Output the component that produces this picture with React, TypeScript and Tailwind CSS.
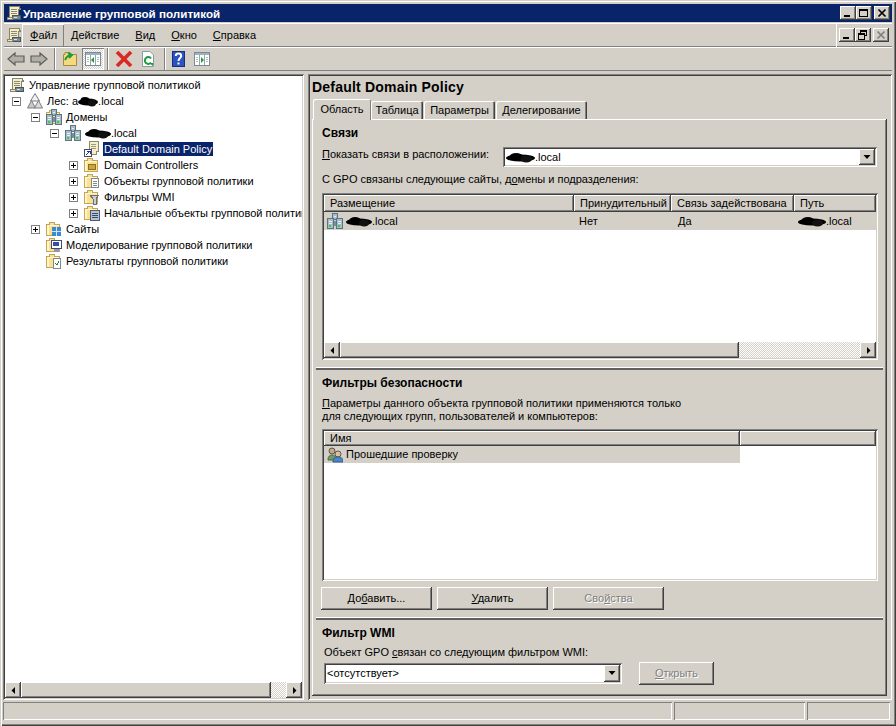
import React from "react";

const raised = "shadow-[inset_-1px_-1px_0_#404040,inset_1px_1px_0_#ffffff,inset_-2px_-2px_0_#808080]";
const sunken = "shadow-[inset_1px_1px_0_#808080,inset_-1px_-1px_0_#ffffff,inset_2px_2px_0_#404040,inset_-2px_-2px_0_#d4d0c8]";
const dither = "bg-[repeating-conic-gradient(#ffffff_0_25%,#d4d0c8_0_50%)] bg-[length:2px_2px]";
const tab = "flex h-[18px] items-center justify-center rounded-t-[2px] pt-[1px] shadow-[inset_1px_1px_0_#ffffff,inset_-1px_0_0_#404040,inset_-2px_0_0_#808080]";

function Blob({ w }: { w: number }) {
  return (
    <svg width={w} height={11} viewBox={`0 0 ${w} 11`} className="shrink-0">
      <ellipse cx={w / 2} cy={6} rx={w / 2} ry={3.6} fill="#000" />
      <ellipse cx={w * 0.35} cy={4} rx={w * 0.22} ry={3} fill="#000" />
      <ellipse cx={w * 0.7} cy={7} rx={w * 0.2} ry={3.5} fill="#111" />
    </svg>
  );
}

function Redacted({ prefix, w }: { prefix?: string; w: number }) {
  return (
    <span className="flex items-center">
      {prefix ? <span>{prefix}</span> : null}
      <Blob w={w} />
      <span>.local</span>
    </span>
  );
}

function Scroll() {
  return (
    <svg width="16" height="16" viewBox="0 0 16 16" shapeRendering="crispEdges" className="shrink-0">
      <path d="M3.5 1.5h10v2h1v1h-2v8h-9z" fill="#f6eec4" stroke="#85856f" strokeWidth="1" />
      <path d="M5 4h6M5 6h6M5 8h6" stroke="#8a8a78" />
      <rect x="6.5" y="10.5" width="8" height="4" fill="#7c8a96" stroke="#4a545c" />
      <rect x="8" y="12" width="3" height="1" fill="#dce4ea" />
      <rect x="1.5" y="12.5" width="5" height="2" fill="#efe8c0" stroke="#85856f" />
    </svg>
  );
}

function Forest() {
  return (
    <svg width="16" height="16" viewBox="0 0 16 16" className="shrink-0">
      <path d="M8 0.5L12.5 8H3.5z" fill="#f0f0f0" stroke="#7c7c7c" />
      <path d="M4.5 7.5L8.5 15H0.5z" fill="#c8c8c8" stroke="#7c7c7c" />
      <path d="M11.5 7.5L15.5 15H7.5z" fill="#dadada" stroke="#7c7c7c" />
    </svg>
  );
}

function Servers() {
  return (
    <svg width="16" height="16" viewBox="0 0 16 16" shapeRendering="crispEdges" className="shrink-0">
      <rect x="5.5" y="0.5" width="5" height="6" fill="#a8bcc8" stroke="#5c7484" />
      <rect x="0.5" y="5.5" width="6" height="10" fill="#a8bcc8" stroke="#5c7484" />
      <rect x="9.5" y="5.5" width="6" height="10" fill="#a8bcc8" stroke="#5c7484" />
      <path d="M2 8h3M2 10h3M11 8h3M11 10h3M7 3h2" stroke="#e8f0f4" />
      <rect x="2" y="12" width="2" height="2" fill="#35d035" />
      <rect x="11" y="12" width="2" height="2" fill="#35d035" />
      <path d="M7 8h2v5H7z" fill="#7a8f9c" />
    </svg>
  );
}

function Folder({ children }: { children?: React.ReactNode }) {
  return (
    <svg width="16" height="16" viewBox="0 0 16 16" shapeRendering="crispEdges" className="shrink-0">
      <path d="M0.5 3.5V14.5H13.5V3.5H8.5V1.5H3.5V3.5z" fill="#fbe08f" stroke="#c4a458" />
      <path d="M1 4h12" stroke="#fff6d0" />
      <rect x="1" y="5" width="2" height="9" fill="#fff6d0" />
      {children}
    </svg>
  );
}

function GpoLink() {
  return (
    <svg width="16" height="16" viewBox="0 0 16 16" shapeRendering="crispEdges" className="shrink-0">
      <path d="M5.5 0.5H14.5V10.5H12.5V13.5H5.5z" fill="#f6eec4" stroke="#8a8a70" />
      <path d="M7 3h5M7 5h5M7 7h5" stroke="#9a9a88" />
      <rect x="0.5" y="8.5" width="7" height="7" fill="#fff" stroke="#4a4a60" />
      <path d="M2 14L6 10M3 10h3v3" stroke="#1830a0" fill="none" />
    </svg>
  );
}

function Users() {
  return (
    <svg width="16" height="16" viewBox="0 0 16 16" className="shrink-0">
      <circle cx="5" cy="4" r="3" fill="#c9a688" stroke="#5a5a50" />
      <path d="M1 13c0-4 2-5 4-5s4 1 4 5z" fill="#6f9a62" stroke="#4a6a45" />
      <circle cx="11" cy="7" r="3" fill="#e0bd9c" stroke="#5a5a50" />
      <path d="M6 15c0-4 2-5 5-5s5 1 5 5z" fill="#4a86c8" stroke="#2f5a90" />
    </svg>
  );
}

function Arrow({ dir }: { dir: "l" | "r" }) {
  return (
    <svg width="18" height="14" viewBox="0 0 18 14" className="shrink-0">
      <path
        d={dir === "l" ? "M1 7L8 1V4H17V10H8V13z" : "M17 7L10 1V4H1V10H10V13z"}
        fill="#b0b0a8"
        stroke="#5e5e58"
        strokeWidth="1.2"
      />
    </svg>
  );
}

function PaneIcon({ left }: { left: boolean }) {
  return (
    <svg width="16" height="14" viewBox="0 0 16 14" shapeRendering="crispEdges" className="shrink-0">
      <rect x="0.5" y="0.5" width="15" height="13" fill="#fff" stroke="#7a8a96" />
      <rect x="1" y="1" width="14" height="2" fill="#9cb0be" />
      <path d="M5.5 3V13M10.5 3V13" stroke="#9aa6ae" />
      <path d="M2 5h2M2 7h2M2 9h2M12 5h2M12 7h2M12 9h2" stroke="#b0bac2" />
      <path d={left ? "M9 5V11L6 8z" : "M7 5V11L10 8z"} fill="#1c9c3c" shapeRendering="auto" />
    </svg>
  );
}

function Tri({ dir }: { dir: "l" | "r" | "d" }) {
  const d = dir === "l" ? "M5 1V8L1.5 4.5z" : dir === "r" ? "M2 1V8L5.5 4.5z" : "M0.5 2H7.5L4 6z";
  const w = dir === "d" ? 8 : 7;
  return (
    <svg width={w} height="9" viewBox={`0 0 ${w} 9`}>
      <path d={d} fill="#000" />
    </svg>
  );
}

function SmallBtn({ dir, w = 16, h = 16 }: { dir: "l" | "r" | "d"; w?: number; h?: number }) {
  return (
    <div style={{ width: w, height: h }} className={`flex shrink-0 items-center justify-center bg-[#d4d0c8] ${raised}`}>
      <Tri dir={dir} />
    </div>
  );
}

function Exp({ open }: { open: boolean }) {
  return (
    <svg width="9" height="9" viewBox="0 0 9 9" shapeRendering="crispEdges" className="shrink-0">
      <rect x="0.5" y="0.5" width="8" height="8" fill="#fff" stroke="#808080" />
      <path d="M2 4.5H7" stroke="#000" />
      {open ? null : <path d="M4.5 2V7" stroke="#000" />}
    </svg>
  );
}

function Row({ pad, exp, icon, children, sel }: { pad: number; exp?: "o" | "c"; icon: React.ReactNode; children: React.ReactNode; sel?: boolean }) {
  return (
    <div style={{ paddingLeft: pad }} className="flex h-4 items-center whitespace-nowrap">
      <div className="flex w-[15px] shrink-0 items-center">{exp ? <Exp open={exp === "o"} /> : null}</div>
      {icon}
      <div className={`ml-[3px] flex h-[14px] items-center px-[1px] ${sel ? "bg-[#0a246a] text-white" : ""}`}>{children}</div>
    </div>
  );
}

function WinBtn({ children, w = 16 }: { children: React.ReactNode; w?: number }) {
  return (
    <div style={{ width: w }} className={`flex h-[14px] shrink-0 items-center justify-center bg-[#d4d0c8] ${raised}`}>
      {children}
    </div>
  );
}

const MinG = () => (
  <svg width="10" height="10" viewBox="0 0 10 10" shapeRendering="crispEdges"><rect x="1" y="7" width="6" height="2" fill="#000" /></svg>
);
const MaxG = () => (
  <svg width="10" height="10" viewBox="0 0 10 10" shapeRendering="crispEdges"><path d="M0.5 1.5H8.5V8.5H0.5z" fill="none" stroke="#000" /><rect x="0" y="1" width="9" height="2" fill="#000" /></svg>
);
const CloseG = ({ color = "#000" }: { color?: string }) => (
  <svg width="10" height="10" viewBox="0 0 10 10"><path d="M1.5 1.5L8.5 8.5M8.5 1.5L1.5 8.5" stroke={color} strokeWidth="1.7" /></svg>
);
const RestoreG = () => (
  <svg width="10" height="10" viewBox="0 0 10 10" shapeRendering="crispEdges">
    <path d="M2.5 2.5V0.5H8.5V5.5H6.5" fill="none" stroke="#000" />
    <rect x="2" y="0" width="7" height="2" fill="#000" />
    <path d="M0.5 3.5H6.5V9.5H0.5z" fill="#d4d0c8" stroke="#000" />
    <rect x="0" y="3" width="7" height="2" fill="#000" />
  </svg>
);

function Btn({ w, h = 23, disabled, children }: { w: number; h?: number; disabled?: boolean; children: React.ReactNode }) {
  return (
    <div style={{ width: w, height: h }} className={`flex shrink-0 items-center justify-center bg-[#d4d0c8] ${raised} ${disabled ? "text-[#808080] [text-shadow:1px_1px_0_#ffffff]" : ""}`}>
      {children}
    </div>
  );
}

function Head({ w, h = 17, children, grow }: { w?: number; h?: number; children?: React.ReactNode; grow?: boolean }) {
  return (
    <div style={w ? { width: w, height: h } : { height: h }} className={`flex shrink-0 items-center overflow-hidden whitespace-nowrap bg-[#d4d0c8] pl-[6px] shadow-[inset_-1px_-1px_0_#404040,inset_1px_1px_0_#ffffff,inset_-2px_-2px_0_#808080] ${grow ? "flex-1" : ""}`}>
      {children}
    </div>
  );
}

function Sep() {
  return <div className="-ml-[6px] mr-[-5px] h-[3px] border-t border-t-white border-b-2 border-b-[#606060] bg-[#d4d0c8]" />;
}

function VSep() {
  return <div className="mx-[3px] h-[22px] w-[2px] border-l border-l-[#808080] border-r border-r-white" />;
}

export default function App() {
  return (
    <div className="flex h-[726px] w-[896px] flex-col overflow-hidden bg-[#d4d0c8] px-[3px] pt-[2px] font-['Liberation_Sans',sans-serif] text-[11px] leading-[13px] text-black shadow-[inset_1px_1px_0_#d4d0c8,inset_2px_2px_0_#ffffff,inset_-1px_-1px_0_#404040,inset_-2px_-2px_0_#808080]">
      {/* title bar */}
      <div className="mx-[1px] mt-[2px] flex h-[18px] shrink-0 items-center bg-[#0a246a] pl-[2px] pr-[2px] text-white">
        <Scroll />
        <span className="ml-[1px] text-[11.65px] font-bold">Управление групповой политикой</span>
        <div className="ml-auto flex">
          <WinBtn><MinG /></WinBtn>
          <WinBtn><MaxG /></WinBtn>
          <div className="ml-[2px]"><WinBtn><CloseG /></WinBtn></div>
        </div>
      </div>

      {/* menu */}
      <div className="mx-[1px] mt-[1px] flex h-[24px] shrink-0 items-center border-t border-t-white border-b border-b-[#808080] pl-[2px]">
        <Scroll />
        <div className="flex h-[23px] w-[42px] items-center pl-[8px] shadow-[inset_1px_1px_0_#ffffff,inset_-1px_-1px_0_#808080]">
          <span><u>Ф</u>айл</span>
        </div>
        <span className="ml-[7px]"><u>Д</u>ействие</span>
        <span className="ml-[16px]"><u>В</u>ид</span>
        <span className="ml-[16px]"><u>О</u>кно</span>
        <span className="ml-[16px]"><u>С</u>правка</span>
        <div className="ml-auto flex h-[23px] items-center border-l border-l-white pl-[2px] pr-[3px]">
          <WinBtn><MinG /></WinBtn>
          <WinBtn><RestoreG /></WinBtn>
          <div className="ml-[2px]"><WinBtn><CloseG color="#808080" /></WinBtn></div>
        </div>
      </div>

      {/* toolbar */}
      <div className="mx-[1px] flex h-[24px] shrink-0 items-center border-t border-t-white border-b border-b-[#808080] pl-[3px]">
        <Arrow dir="l" />
        <div className="ml-[5px]"><Arrow dir="r" /></div>
        <div className="ml-[3px]"><VSep /></div>
        <div className="ml-[3px]">
          <svg width="16" height="16" viewBox="0 0 16 16" className="shrink-0">
            <path d="M1.5 3.5V14.5H14.5V3.5H8V1.5H3V3.5z" fill="#f5d97f" stroke="#a88a3a" />
            <path d="M3 9C5 5 8 4 9 4M6 2L10 4L7 7" fill="none" stroke="#1c9c3c" strokeWidth="2" />
          </svg>
        </div>
        <div className={`ml-[4px] flex h-[22px] w-[22px] items-center justify-center ${dither} shadow-[inset_1px_1px_0_#808080,inset_-1px_-1px_0_#ffffff]`}>
          <PaneIcon left />
        </div>
        <VSep />
        <div className="ml-[3px]">
          <svg width="18" height="16" viewBox="0 0 18 16"><path d="M2 1L16 15M16 1L2 15" stroke="#d82a20" strokeWidth="3.6" /></svg>
        </div>
        <div className="ml-[7px]">
          <svg width="16" height="16" viewBox="0 0 16 16">
            <path d="M2.5 0.5H10L13.5 4V15.5H2.5z" fill="#fff" stroke="#8a9aa6" />
            <path d="M11 7.5A3.4 3.4 0 1 0 11 11.5" fill="none" stroke="#1c9c3c" strokeWidth="2" />
            <path d="M9 12h4v3z" fill="#1c9c3c" />
          </svg>
        </div>
        <div className="ml-[5px]"><VSep /></div>
        <div className="ml-[3px]">
          <svg width="13" height="16" viewBox="0 0 13 16">
            <rect x="0.5" y="0.5" width="12" height="15" fill="#2a52c0" stroke="#1a2f80" />
            <path d="M3.8 5C3.8 1.8 9.2 1.8 9.2 5C9.2 7 6.5 7 6.5 10M6.5 11.5V13.5" fill="none" stroke="#fff" strokeWidth="2" />
          </svg>
        </div>
        <div className="ml-[9px]"><PaneIcon left={false} /></div>
      </div>

      {/* panes */}
      <div className="mt-[3px] flex h-[626px] shrink-0">
        {/* tree */}
        <div className={`flex h-full w-[301px] shrink-0 flex-col bg-white p-[2px] ${sunken}`}>
          <div className="flex-1 overflow-hidden pt-[1px]">
            <div className="-ml-[11px]"><Row pad={0} icon={<Scroll />}>Управление групповой политикой</Row></div>
            <Row pad={7} exp="o" icon={<Forest />}><Redacted prefix="Лес: а" w={20} /></Row>
            <Row pad={26} exp="o" icon={<Folder><Servers /></Folder>}>Домены</Row>
            <Row pad={45} exp="o" icon={<Servers />}><Redacted w={26} /></Row>
            <Row pad={64} icon={<GpoLink />} sel>Default Domain Policy</Row>
            <Row pad={64} exp="c" icon={<Folder><rect x="4" y="7" width="7" height="5" fill="#c9a83a" stroke="#8a7020" /></Folder>}>Domain Controllers</Row>
            <Row pad={64} exp="c" icon={<Folder><path d="M7.5 5.5H14.5V14.5H7.5z" fill="#fff" stroke="#808890" /><path d="M9 8h4M9 10h4M9 12h4" stroke="#808890" /></Folder>}>Объекты групповой политики</Row>
            <Row pad={64} exp="c" icon={<Folder><path d="M6 6H15L12 10V15H9V10z" fill="#c8ccd4" stroke="#6a7078" /></Folder>}>Фильтры WMI</Row>
            <Row pad={64} exp="c" icon={<Folder><path d="M6.5 5.5H15.5V15.5H6.5z" fill="#b4c4d4" stroke="#4a5a70" /><path d="M8 8h6M8 10h6M8 12h6" stroke="#3a4a60" /></Folder>}>
              <span className="w-[198px] overflow-hidden">Начальные объекты групповой политики</span>
            </Row>
            <Row pad={26} exp="c" icon={<Folder><rect x="6" y="6" width="9" height="9" fill="#3a8ad0" /><path d="M6 10H15M10 6V15" stroke="#cfe6f8" /></Folder>}>Сайты</Row>
            <Row pad={26} icon={<Folder><rect x="5" y="3" width="10" height="8" fill="#fff" stroke="#404a78" /><rect x="7" y="5" width="6" height="4" fill="#3050a8" /><rect x="8" y="12" width="5" height="3" fill="#9098a8" /></Folder>}>Моделирование групповой политики</Row>
            <Row pad={26} icon={<Folder><path d="M7.5 5.5H14.5V15.5H7.5z" fill="#fff" stroke="#808890" /><path d="M9 10L11 12L13 8" fill="none" stroke="#208040" /></Folder>}>Результаты групповой политики</Row>
          </div>
          <div className="flex h-[16px] shrink-0">
            <SmallBtn dir="l" h={16} />
            <div className={`h-[16px] flex-1 bg-[#d4d0c8] ${raised}`} />
            <div className={`h-[16px] w-[15px] ${dither}`} />
            <SmallBtn dir="r" h={16} />
          </div>
        </div>

        {/* right */}
        <div className={`ml-[4px] flex h-full w-[584px] flex-col pl-[4px] pr-[5px] pt-[3px] ${sunken}`}>
          <div className="h-[21px] shrink-0 text-[14px] font-bold leading-[20px] tracking-[0.2px]">Default Domain Policy</div>
          <div className="flex h-[21px] shrink-0 items-end pl-[1px]">
            <div className="relative z-10 flex h-[21px] w-[58px] translate-y-[1px] items-start justify-center rounded-t-[2px] bg-[#d4d0c8] pt-[4px] shadow-[inset_1px_1px_0_#ffffff,inset_-1px_0_0_#808080]">Область</div>
            <div className={`w-[52px] ${tab}`}>Таблица</div>
            <div className={`ml-[1px] w-[71px] ${tab}`}>Параметры</div>
            <div className={`ml-[1px] w-[91px] ${tab}`}>Делегирование</div>
          </div>
          <div className={`flex h-[577px] w-[575px] shrink-0 flex-col pl-[10px] pr-[9px] pt-[6px] ${raised}`}>
            <div className="flex h-4 items-center text-[12px] font-bold">Связи</div>
            <div className="mt-[6px] flex h-[20px] shrink-0">
              <div className="w-[181px] pt-[1px]"><u>П</u>оказать связи в расположении:</div>
              <div className={`flex w-[374px] items-center justify-between bg-white p-[2px] pl-[3px] ${sunken}`}>
                <Redacted w={29} />
                <SmallBtn dir="d" w={16} h={16} />
              </div>
            </div>
            <div className="mt-[4px] flex h-4 items-center"><span>С GPO связаны следующие сайты, д<u>о</u>мены и подразделения:</span></div>
            <div className={`mt-[6px] flex h-[167px] w-[556px] shrink-0 flex-col bg-white p-[2px] ${sunken}`}>
              <div className="flex">
                <Head w={250}>Размещение</Head>
                <Head w={97}>Принудительный</Head>
                <Head w={123}>Связь задействована</Head>
                <Head grow>Путь</Head>
              </div>
              <div className="flex h-[18px] shrink-0 items-center bg-[#d4d0c8]">
                <div className="flex w-[250px] items-center pl-[3px]"><Servers /><span className="ml-[3px]" /><Redacted w={26} /></div>
                <div className="w-[97px] pl-[5px]">Нет</div>
                <div className="w-[123px] pl-[7px]">Да</div>
                <div className="pl-[4px]"><Redacted w={28} /></div>
              </div>
              <div className="flex-1" />
              <div className="flex h-[16px] shrink-0">
                <SmallBtn dir="l" />
                <div className={`h-[16px] w-[399px] bg-[#d4d0c8] ${raised}`} />
                <div className={`h-[16px] flex-1 ${dither}`} />
                <SmallBtn dir="r" />
              </div>
            </div>

            <div className="mt-[7px]"><Sep /></div>
            <div className="mt-[5px] flex h-4 items-center text-[12px] font-bold">Фильтры безопасности</div>
            <div className="mt-[6px]"><u>П</u>араметры данного объекта групповой политики применяются только<br />для следующих групп, пользователей и компьютеров:</div>
            <div className={`mt-[6px] flex h-[152px] w-[556px] shrink-0 flex-col bg-white p-[2px] ${sunken}`}>
              <div className="flex">
                <Head w={416} h={15}>Имя</Head>
                <Head grow h={15} />
              </div>
              <div className="flex h-[17px] w-[416px] shrink-0 items-center bg-[#d4d0c8] pl-[3px]">
                <Users />
                <span className="ml-[3px]">Прошедшие проверку</span>
              </div>
            </div>
            <div className="-ml-[1px] mt-[6px] flex gap-[5px]">
              <Btn w={111}><span>До<u>б</u>авить...</span></Btn>
              <Btn w={111}><span><u>У</u>далить</span></Btn>
              <Btn w={111} disabled><span>Сво<u>й</u>ства</span></Btn>
            </div>
            <div className="mt-[7px]"><Sep /></div>
            <div className="mt-[5px] flex h-4 items-center text-[12px] font-bold">Фильтр WMI</div>
            <div className="mt-[3px] flex h-4 items-center pl-[2px]"><span>Объект GPO <u>с</u>вязан со следующим фильтром WMI:</span></div>
            <div className="mt-[2px] flex pl-[2px]">
              <div className={`mt-[1px] flex h-[21px] w-[298px] items-center justify-between bg-white p-[2px] pl-[3px] ${sunken}`}>
                <span>&lt;отсутствует&gt;</span>
                <SmallBtn dir="d" w={16} h={17} />
              </div>
              <div className="ml-[17px]">
                <Btn w={75}  disabled><span><u>О</u>ткрыть</span></Btn>
              </div>
            </div>
          </div>
        </div>
      </div>

      {/* status */}
      <div className="mt-[2px] flex h-[19px] shrink-0 gap-[2px]">
        <div className="h-[18px] w-[669px] shadow-[inset_1px_1px_0_#808080,inset_-1px_-1px_0_#ffffff]" />
        <div className="h-[18px] w-[131px] shadow-[inset_1px_1px_0_#808080,inset_-1px_-1px_0_#ffffff]" />
        <div className="h-[18px] w-[83px] shadow-[inset_1px_1px_0_#808080,inset_-1px_-1px_0_#ffffff]" />
      </div>
    </div>
  );
}
